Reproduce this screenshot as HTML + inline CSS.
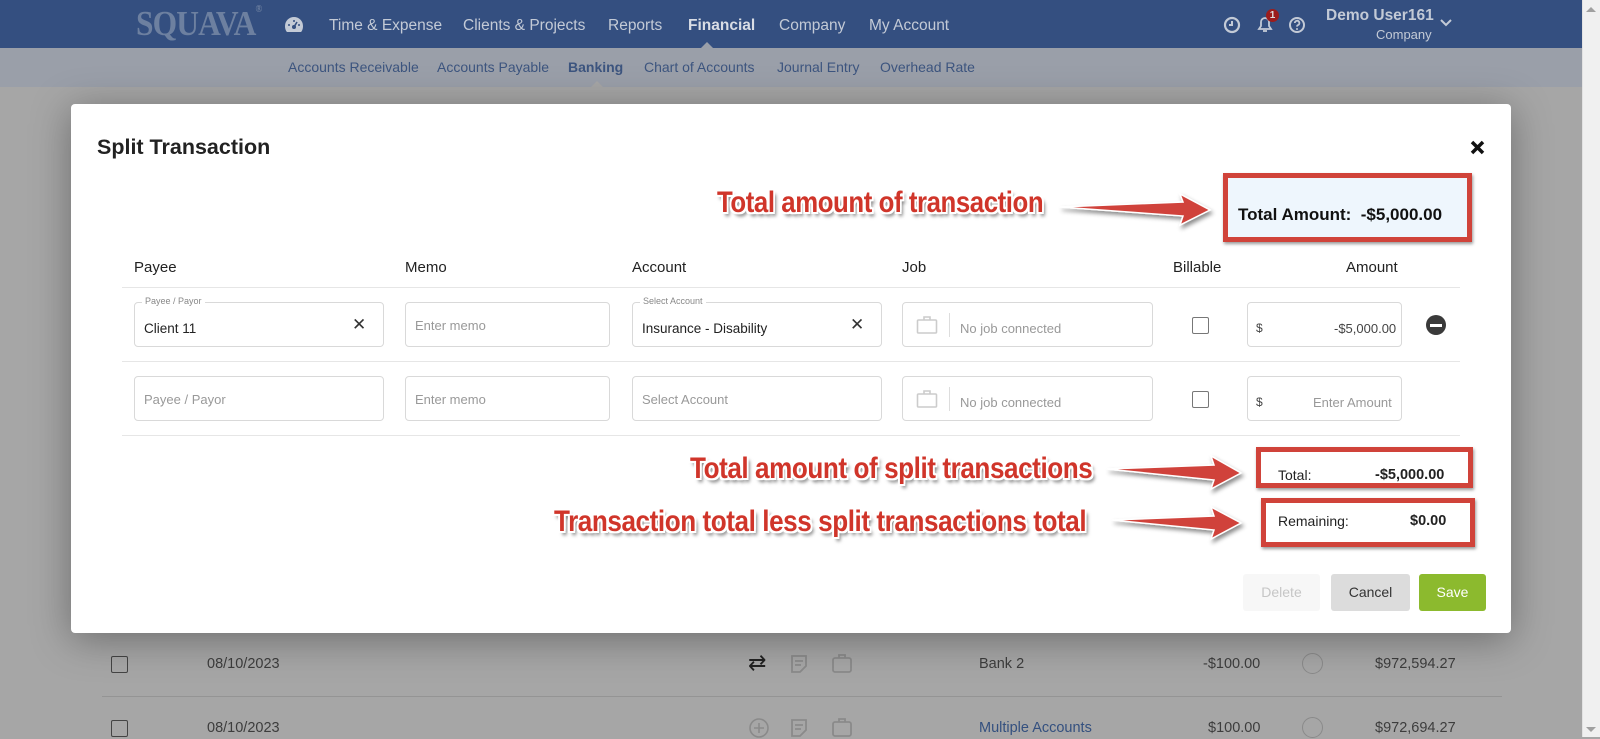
<!DOCTYPE html>
<html><head><meta charset="utf-8">
<style>
*{box-sizing:border-box;margin:0;padding:0}
body{width:1600px;height:737px;overflow:hidden;position:relative;background:#a6a6a6;font-family:"Liberation Sans",sans-serif;color:#222}
.a{position:absolute;white-space:nowrap}
.nav{left:0;top:0;width:1582px;height:48px;background:#344f80}
.sub{left:0;top:48px;width:1582px;height:39px;background:#9a9fa9}
.navt{color:#c3cad6;font-size:15.5px;top:17px}
.subt{color:#3d557f;font-size:14px;top:59px}
.sb{left:1582px;top:0;width:18px;height:737px;background:#f0f0f0;border-left:1px solid #e2e2e2}
.modal{left:71px;top:104px;width:1440px;height:529px;background:#fff;border-radius:4px;box-shadow:0 6px 40px rgba(0,0,0,.35)}
.hd{font-size:15px;color:#222;top:259px}
.inp{border:1px solid #d9d9d9;border-radius:4px;height:45px;background:#fff}
.ph{font-size:13px;color:#999}
.ann{color:#d0352a;font-weight:bold;font-size:30px;transform-origin:0 50%;letter-spacing:-0.5px;
text-shadow:-2px 0 #fff,2px 0 #fff,0 -2px #fff,0 2px #fff,-2px -2px #fff,2px 2px #fff,-2px 2px #fff,2px -2px #fff,3px 4px 4px rgba(0,0,0,.55)}
.rbox{border:5px solid #d0433a;box-shadow:1px 2px 3px rgba(0,0,0,.4)}
.chk{width:17px;height:17px;border:1.5px solid #777;border-radius:2px;background:#fff}
.rowt{font-size:14.5px;color:#3d3d3d}
</style></head><body>
<div class="a nav"></div>
<div class="a sub"></div>
<div class="a" style="left:136px;top:4px;font-family:'Liberation Serif',serif;font-weight:bold;font-size:35px;color:#6d80a0;transform:scaleX(.9);transform-origin:0 0;letter-spacing:-1px">SQUAVA<span style="font-size:10px;vertical-align:top">®</span></div>
<svg class="a" style="left:284px;top:16px" width="20" height="18" viewBox="0 0 20 18"><path d="M10 1a9 9 0 0 0-9 9c0 3 1 5 2 6h14c1-1 2-3 2-6a9 9 0 0 0-9-9z" fill="#c3cad6"/><circle cx="10" cy="11" r="2" fill="#344f80"/><path d="M10 11l3-5" stroke="#344f80" stroke-width="1.6"/><circle cx="5" cy="9" r="1" fill="#344f80"/><circle cx="10" cy="5" r="1" fill="#344f80"/><circle cx="15" cy="9" r="1" fill="#344f80"/></svg>
<div class="a navt" style="left:329px">Time &amp; Expense</div>
<div class="a navt" style="left:463px">Clients &amp; Projects</div>
<div class="a navt" style="left:608px">Reports</div>
<div class="a navt" style="left:688px;font-weight:bold;color:#d9dde5">Financial</div>
<div class="a navt" style="left:779px">Company</div>
<div class="a navt" style="left:869px">My Account</div>
<div class="a" style="left:701px;top:42px;width:0;height:0;border:6px solid transparent;border-bottom-color:#9a9fa9;border-top:0"></div>
<svg class="a" style="left:1223px;top:16px" width="18" height="18" viewBox="0 0 18 18"><circle cx="9" cy="9" r="7" fill="none" stroke="#c3cad6" stroke-width="2.2"/><path d="M9 5v4h-3" fill="none" stroke="#c3cad6" stroke-width="2"/></svg>
<svg class="a" style="left:1255px;top:14px" width="20" height="20" viewBox="0 0 20 20"><path d="M4 15h12l-2-3V8a4 4 0 0 0-8 0v4z" fill="none" stroke="#c3cad6" stroke-width="1.8"/><path d="M8 17h4" stroke="#c3cad6" stroke-width="1.8"/></svg>
<div class="a" style="left:1266px;top:9px;width:13px;height:13px;border-radius:50%;background:#9b1c1c;color:#ddd;font-size:10px;text-align:center;line-height:13px;font-weight:bold">1</div>
<svg class="a" style="left:1288px;top:16px" width="18" height="18" viewBox="0 0 18 18"><circle cx="9" cy="9" r="7" fill="none" stroke="#c3cad6" stroke-width="2"/><path d="M6.8 7a2.3 2.3 0 1 1 3 2.2c-.6.3-.8.7-.8 1.4" fill="none" stroke="#c3cad6" stroke-width="1.8"/><circle cx="9" cy="13" r="1" fill="#c3cad6"/></svg>
<div class="a" style="left:1326px;top:7px;font-size:15.5px;font-weight:bold;color:#c3cad6">Demo User161</div>
<div class="a" style="left:1376px;top:27px;font-size:13px;color:#c3cad6">Company</div>
<svg class="a" style="left:1440px;top:19px" width="12" height="8" viewBox="0 0 12 8"><path d="M1 1l5 5 5-5" fill="none" stroke="#c3cad6" stroke-width="2"/></svg>
<div class="a subt" style="left:288px">Accounts Receivable</div>
<div class="a subt" style="left:437px">Accounts Payable</div>
<div class="a subt" style="left:568px;font-weight:bold">Banking</div>
<div class="a subt" style="left:644px">Chart of Accounts</div>
<div class="a subt" style="left:777px">Journal Entry</div>
<div class="a subt" style="left:880px">Overhead Rate</div>
<div class="a" style="left:591px;top:81px;width:0;height:0;border:6px solid transparent;border-bottom-color:#a6a6a6;border-top:0"></div>
<div class="a sb"></div>
<div class="a" style="left:1586px;top:7px;border:5px solid transparent;border-bottom:5px solid #a0a0a0;border-top:0"></div>
<div class="a" style="left:1586px;top:727px;border:5px solid transparent;border-top:5px solid #a0a0a0;border-bottom:0"></div>

<!-- background rows -->
<div class="a chk" style="left:111px;top:656px;border-color:#444;background:transparent"></div>
<div class="a rowt" style="left:207px;top:656px">08/10/2023</div>
<div class="a" style="left:748px;top:650px;font-size:22px;color:#222">⇄</div>
<svg class="a" style="left:790px;top:654px" width="18" height="20" viewBox="0 0 18 20"><path d="M2 2h14v10l-6 6H2z M5 7h8M5 11h6" fill="none" stroke="#8a8a8a" stroke-width="1.8"/></svg>
<svg class="a" style="left:831px;top:652px" width="22" height="22" viewBox="0 0 22 22"><rect x="2" y="6" width="18" height="14" rx="2" fill="none" stroke="#8a8a8a" stroke-width="1.8"/><path d="M8 6V3h6v3" fill="none" stroke="#8a8a8a" stroke-width="1.8"/></svg>
<div class="a rowt" style="left:979px;top:656px">Bank 2</div>
<div class="a rowt" style="left:1203px;top:656px">-$100.00</div>
<div class="a" style="left:1302px;top:653px;width:21px;height:21px;border:1.5px solid #8a8a8a;border-radius:50%"></div>
<div class="a rowt" style="left:1375px;top:656px">$972,594.27</div>
<div class="a" style="left:102px;top:696px;width:1400px;height:1px;background:#949494"></div>
<div class="a chk" style="left:111px;top:720px;border-color:#444;background:transparent"></div>
<div class="a rowt" style="left:207px;top:720px">08/10/2023</div>
<svg class="a" style="left:748px;top:717px" width="22" height="22" viewBox="0 0 22 22"><circle cx="11" cy="11" r="9" fill="none" stroke="#8a8a8a" stroke-width="1.6"/><path d="M11 6v10M6 11h10" stroke="#8a8a8a" stroke-width="1.6"/></svg>
<svg class="a" style="left:790px;top:718px" width="18" height="20" viewBox="0 0 18 20"><path d="M2 2h14v10l-6 6H2z M5 7h8M5 11h6" fill="none" stroke="#8a8a8a" stroke-width="1.8"/></svg>
<svg class="a" style="left:831px;top:716px" width="22" height="22" viewBox="0 0 22 22"><rect x="2" y="6" width="18" height="14" rx="2" fill="none" stroke="#8a8a8a" stroke-width="1.8"/><path d="M8 6V3h6v3" fill="none" stroke="#8a8a8a" stroke-width="1.8"/></svg>
<div class="a rowt" style="left:979px;top:720px;color:#34507f">Multiple Accounts</div>
<div class="a rowt" style="left:1208px;top:720px">$100.00</div>
<div class="a" style="left:1302px;top:717px;width:21px;height:21px;border:1.5px solid #8a8a8a;border-radius:50%"></div>
<div class="a rowt" style="left:1375px;top:720px">$972,694.27</div>

<!-- modal -->
<div class="a modal"></div>
<div class="a" style="left:97px;top:135px;font-size:21.5px;font-weight:bold;color:#222">Split Transaction</div>
<svg class="a" style="left:1470px;top:140px" width="15" height="15" viewBox="0 0 15 15"><path d="M2 2l11 11M13 2L2 13" stroke="#111" stroke-width="3.5"/></svg>

<div class="a rbox" style="left:1223px;top:173px;width:249px;height:69px;background:#eef6fd;border-width:5px"></div>
<div class="a" style="left:1238px;top:205px;font-size:17px;font-weight:bold;color:#111">Total Amount:&nbsp; -$5,000.00</div>

<div class="a hd" style="left:134px">Payee</div>
<div class="a hd" style="left:405px">Memo</div>
<div class="a hd" style="left:632px">Account</div>
<div class="a hd" style="left:902px">Job</div>
<div class="a hd" style="left:1173px">Billable</div>
<div class="a hd" style="left:1346px">Amount</div>
<div class="a" style="left:122px;top:287px;width:1338px;height:1px;background:#e6e6e6"></div>

<!-- row 1 -->
<div class="a inp" style="left:134px;top:302px;width:250px"></div>
<div class="a" style="left:142px;top:296px;font-size:9px;color:#888;background:#fff;padding:0 3px">Payee / Payor</div>
<div class="a" style="left:144px;top:321px;font-size:13.5px;color:#222">Client 11</div>
<div class="a" style="left:352px;top:315px;font-size:17px;color:#333">✕</div>
<div class="a inp" style="left:405px;top:302px;width:205px"></div>
<div class="a ph" style="left:415px;top:318px">Enter memo</div>
<div class="a inp" style="left:632px;top:302px;width:250px"></div>
<div class="a" style="left:640px;top:296px;font-size:9px;color:#888;background:#fff;padding:0 3px">Select Account</div>
<div class="a" style="left:642px;top:321px;font-size:13.5px;color:#222">Insurance - Disability</div>
<div class="a" style="left:850px;top:315px;font-size:17px;color:#333">✕</div>
<div class="a inp" style="left:902px;top:302px;width:251px"></div>
<svg class="a" style="left:916px;top:315px" width="22" height="20" viewBox="0 0 22 20"><rect x="1.5" y="5" width="19" height="13" rx="1" fill="none" stroke="#ccc" stroke-width="1.6"/><path d="M8 5V2h6v3" fill="none" stroke="#ccc" stroke-width="1.6"/></svg>
<div class="a" style="left:949px;top:313px;width:1px;height:24px;background:#ddd"></div>
<div class="a ph" style="left:960px;top:321px">No job connected</div>
<div class="a chk" style="left:1192px;top:317px"></div>
<div class="a inp" style="left:1247px;top:302px;width:155px"></div>
<div class="a" style="left:1256px;top:321px;font-size:12px;color:#444">$</div>
<div class="a" style="left:1334px;top:321px;font-size:13px;color:#444">-$5,000.00</div>
<div class="a" style="left:1426px;top:315px;width:20px;height:20px;border-radius:50%;background:#3a3a3a"></div>
<div class="a" style="left:1430px;top:324px;width:12px;height:3px;background:#fff"></div>
<div class="a" style="left:122px;top:361px;width:1338px;height:1px;background:#e6e6e6"></div>

<!-- row 2 -->
<div class="a inp" style="left:134px;top:376px;width:250px"></div>
<div class="a ph" style="left:144px;top:392px">Payee / Payor</div>
<div class="a inp" style="left:405px;top:376px;width:205px"></div>
<div class="a ph" style="left:415px;top:392px">Enter memo</div>
<div class="a inp" style="left:632px;top:376px;width:250px"></div>
<div class="a ph" style="left:642px;top:392px">Select Account</div>
<div class="a inp" style="left:902px;top:376px;width:251px"></div>
<svg class="a" style="left:916px;top:389px" width="22" height="20" viewBox="0 0 22 20"><rect x="1.5" y="5" width="19" height="13" rx="1" fill="none" stroke="#ccc" stroke-width="1.6"/><path d="M8 5V2h6v3" fill="none" stroke="#ccc" stroke-width="1.6"/></svg>
<div class="a" style="left:949px;top:387px;width:1px;height:24px;background:#ddd"></div>
<div class="a ph" style="left:960px;top:395px">No job connected</div>
<div class="a chk" style="left:1192px;top:391px"></div>
<div class="a inp" style="left:1247px;top:376px;width:155px"></div>
<div class="a" style="left:1256px;top:395px;font-size:12px;color:#444">$</div>
<div class="a ph" style="left:1313px;top:395px">Enter Amount</div>
<div class="a" style="left:122px;top:435px;width:1338px;height:1px;background:#e6e6e6"></div>

<!-- totals -->
<div class="a rbox" style="left:1256px;top:447px;width:217px;height:41px;background:#fff"></div>
<div class="a" style="left:1278px;top:467px;font-size:14px;color:#222">Total:</div>
<div class="a" style="left:1375px;top:467px;font-size:14.5px;font-weight:bold;color:#222">-$5,000.00</div>
<div class="a rbox" style="left:1261px;top:498px;width:214px;height:49px;background:#fff"></div>
<div class="a" style="left:1278px;top:513px;font-size:14px;color:#222">Remaining:</div>
<div class="a" style="left:1410px;top:513px;font-size:14.5px;font-weight:bold;color:#222">$0.00</div>

<!-- buttons -->
<div class="a" style="left:1243px;top:574px;width:77px;height:37px;background:#f7f7f7;border-radius:3px;color:#c6c6c6;font-size:14px;text-align:center;line-height:37px">Delete</div>
<div class="a" style="left:1331px;top:574px;width:79px;height:37px;background:#dcdcdc;border-radius:3px;color:#333;font-size:14px;text-align:center;line-height:37px">Cancel</div>
<div class="a" style="left:1419px;top:574px;width:67px;height:37px;background:#8cba2e;border-radius:3px;color:#fff;font-size:14px;text-align:center;line-height:37px">Save</div>

<!-- annotations -->
<div class="a ann" style="left:717px;top:186px;transform:scaleX(.86)">Total amount of transaction</div>
<div class="a ann" style="left:690px;top:452px;transform:scaleX(.87)">Total amount of split transactions</div>
<div class="a ann" style="left:554px;top:505px;transform:scaleX(.87)">Transaction total less split transactions total</div>
<svg class="a" style="left:0;top:0" width="1600" height="737" viewBox="0 0 1600 737">
<defs><filter id="sh"><feDropShadow dx="2" dy="3" stdDeviation="2" flood-color="#000" flood-opacity=".45"/></filter></defs>
<g fill="#d0433a" stroke="#fff" stroke-width="1.5" filter="url(#sh)">
<path d="M1060 207 L1183 202 L1180 194 L1210 210 L1180 225 L1183 216 Z"/>
<path d="M1107 469 L1214 465 L1211 456 L1241 473 L1211 489 L1214 480 Z"/>
<path d="M1112 520 L1214 516 L1211 507 L1241 523 L1211 539 L1214 530 Z"/>
</g></svg>
</body></html>
